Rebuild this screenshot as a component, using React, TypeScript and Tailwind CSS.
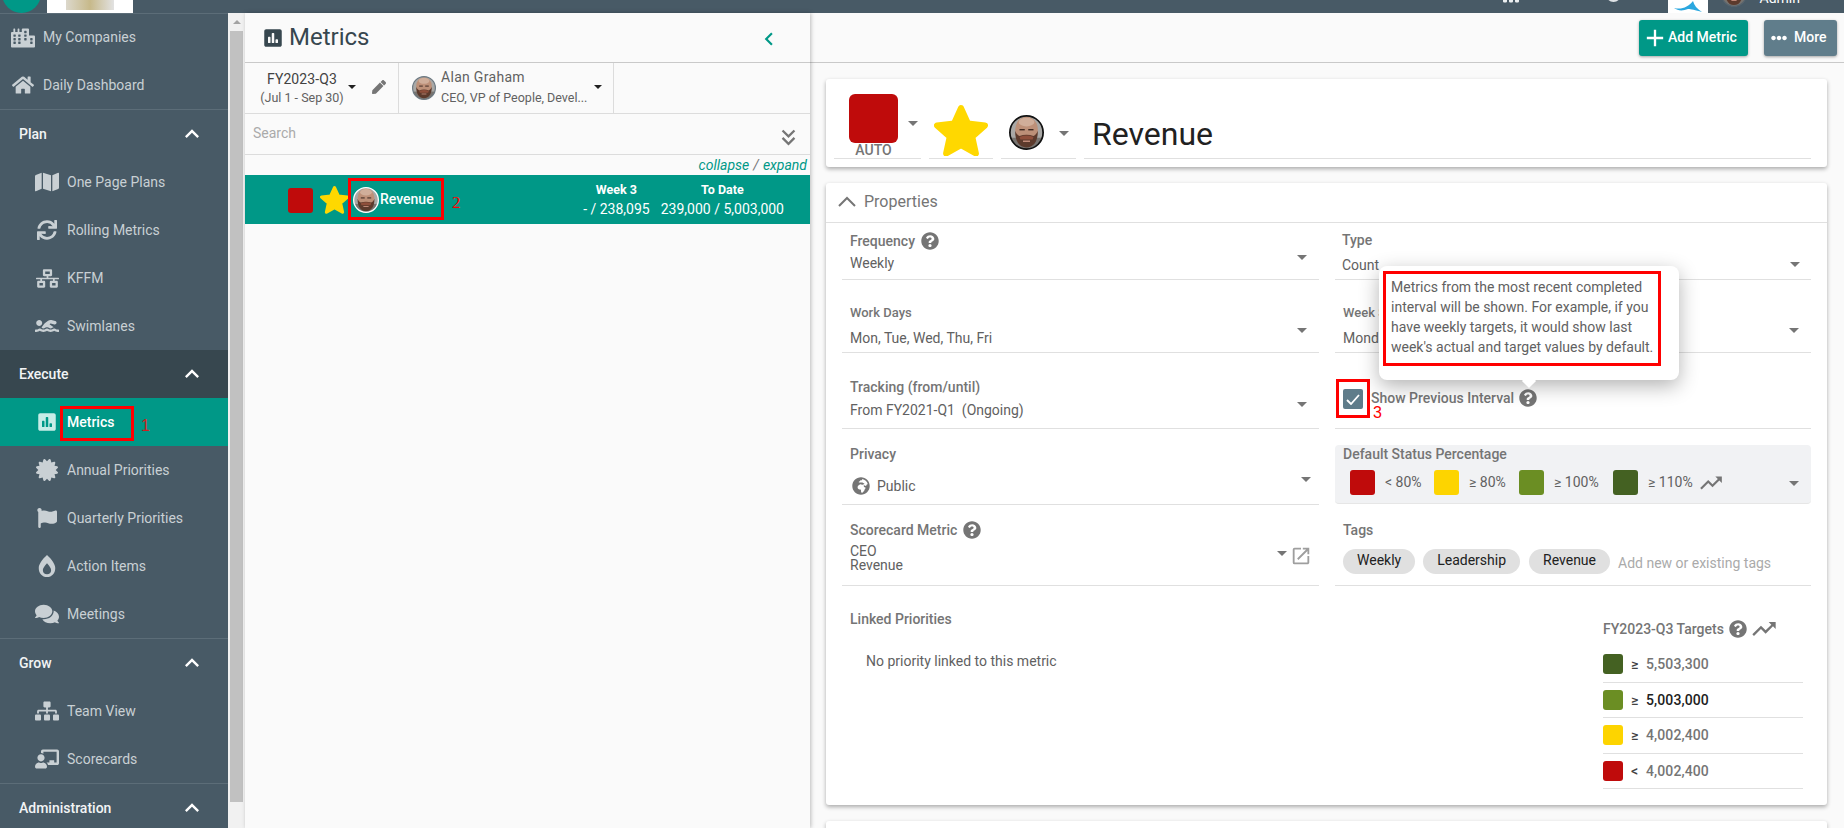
import React from "react";
import {
  FaCity, FaHome, FaMap, FaSync, FaNetworkWired, FaSwimmer, FaPoll, FaCertificate, FaFlag, FaBurn,
  FaComments, FaSitemap, FaChalkboardTeacher, FaQuestionCircle, FaGlobeAfrica, FaPen, FaEllipsisH,
} from "react-icons/fa";
import { MdExpandLess, MdTrendingUp, MdOpenInNew, MdAdd, MdKeyboardDoubleArrowDown, MdChevronLeft } from "react-icons/md";

const RED = "#bf0b0b";
const YELLOW = "#fdd400";
const LIME = "#6b8e23";
const GREEN = "#446122";

function Avatar({ size, ring }: { size: number; ring: string }) {
  const id = `c${size}${ring.slice(1)}`;
  return (
    <svg width={size} height={size} viewBox="0 0 40 40" className="shrink-0">
      <clipPath id={id}><circle cx="20" cy="20" r="19" /></clipPath>
      <g clipPath={`url(#${id})`}>
        <rect width="40" height="40" fill="#a9a8a6" />
        <rect x="0" y="26" width="40" height="14" fill="#77736f" />
        <ellipse cx="20" cy="17" rx="13" ry="15" fill="#bd9078" />
        <ellipse cx="20" cy="8" rx="9" ry="5" fill="#d0ae9a" />
        <path d="M7 18c0 14 6 19 13 19s13-5 13-19c-1 3-3 5-5 6-5-2-11-2-16 0-2-1-4-3-5-6z" fill="#5c3a2c" />
        <path d="M12 25c5-2 11-2 16 0l-1 3H13z" fill="#8f4f3b" />
        <rect x="12" y="16" width="6" height="1.6" fill="#3f2a22" />
        <rect x="22" y="16" width="6" height="1.6" fill="#3f2a22" />
        <path d="M16 30h8" stroke="#c08a78" strokeWidth="1.5" />
      </g>
      <circle cx="20" cy="20" r="19" fill="none" stroke={ring} strokeWidth="2" />
    </svg>
  );
}

function Star({ w, h }: { w: number; h: number }) {
  return (
    <svg width={w} height={h} viewBox="0 0 54 52" className="shrink-0">
      <path
        d="M27 4l7 15.5 17 1.9-12.7 11.4 3.6 16.7L27 41.2l-14.9 8.3 3.6-16.7L3 21.4l17-1.9z"
        fill="#ffd800" stroke="#ffd800" strokeWidth="6" strokeLinejoin="round"
      />
    </svg>
  );
}

function Caret({ className = "" }: { className?: string }) {
  return <div className={`w-0 h-0 shrink-0 border-x-[5px] border-x-transparent border-t-[5px] border-t-[#757575] ${className}`} />;
}

function Help() {
  return <FaQuestionCircle size={18} color="#757575" className="shrink-0" />;
}

function Swatch({ color, size }: { color: string; size: "s" | "m" }) {
  return <div className={`shrink-0 rounded-[3px] ${size === "s" ? "w-5 h-5" : "w-[25px] h-[25px]"}`} style={{ backgroundColor: color }} />;
}

function NavItem({ icon, label }: { icon: React.ReactNode; label: string }) {
  return (
    <div className="h-12 shrink-0 flex items-center pl-[35px] text-[14px] text-[#c9d0d4]">
      <div className="w-6 flex justify-center">{icon}</div>
      <span className="ml-2">{label}</span>
    </div>
  );
}

function Section({ label, dark }: { label: string; dark?: boolean }) {
  return (
    <div className={`h-12 shrink-0 flex items-center justify-between pl-[19px] pr-[22px] text-[14px] font-medium text-[#f2f4f5] ${dark ? "bg-[#37474f]" : ""}`}>
      <span>{label}</span>
      <MdExpandLess size={28} color="#ffffff" />
    </div>
  );
}

function Sidebar() {
  const c = "#c9d0d4";
  return (
    <div className="w-[228px] shrink-0 bg-[#485a66] border-t border-[#5c6d78] flex flex-col overflow-hidden">
      <div className="h-[47px] shrink-0 flex items-center pl-[11px] text-[14px] text-[#c9d0d4]">
        <FaCity size={24} color={c} />
        <span className="ml-2">My Companies</span>
      </div>
      <div className="h-12 shrink-0 flex items-center pl-[11px] text-[14px] text-[#c9d0d4]">
        <div className="w-6 flex justify-center"><FaHome size={22} color={c} /></div>
        <span className="ml-2">Daily Dashboard</span>
      </div>
      <div className="h-px shrink-0 bg-[#5c6d78]" />
      <Section label="Plan" />
      <NavItem icon={<FaMap size={24} color={c} />} label="One Page Plans" />
      <NavItem icon={<FaSync size={20} color={c} />} label="Rolling Metrics" />
      <NavItem icon={<FaNetworkWired size={23} color={c} />} label="KFFM" />
      <NavItem icon={<FaSwimmer size={24} color={c} />} label="Swimlanes" />
      <Section label="Execute" dark />
      <div className="h-12 shrink-0 flex items-center pl-[35px] text-[14px] font-medium text-white bg-[#009887]">
        <div className="w-6 flex justify-center"><FaPoll size={20} color="#c8ece7" /></div>
        <span className="ml-2">Metrics</span>
      </div>
      <NavItem icon={<FaCertificate size={22} color={c} />} label="Annual Priorities" />
      <NavItem icon={<FaFlag size={20} color={c} />} label="Quarterly Priorities" />
      <NavItem icon={<FaBurn size={22} color={c} />} label="Action Items" />
      <NavItem icon={<FaComments size={24} color={c} />} label="Meetings" />
      <div className="h-px shrink-0 bg-[#5c6d78]" />
      <Section label="Grow" />
      <NavItem icon={<FaSitemap size={24} color={c} />} label="Team View" />
      <NavItem icon={<FaChalkboardTeacher size={24} color={c} />} label="Scorecards" />
      <div className="h-px shrink-0 bg-[#5c6d78]" />
      <Section label="Administration" />
    </div>
  );
}

function Scrollbar() {
  return (
    <div className="w-[17px] shrink-0 bg-[#f1f1f1] flex flex-col items-center">
      <div className="h-[18px] flex items-center">
        <div className="w-0 h-0 border-x-[4px] border-x-transparent border-b-[4px] border-b-[#a3a3a3]" />
      </div>
      <div className="w-[13px] h-[771px] bg-[#c1c1c1]" />
    </div>
  );
}

function LeftPanel() {
  return (
    <div className="w-[565px] shrink-0 bg-[#fafafa] flex flex-col relative z-10 shadow-[1px_0_4px_rgba(0,0,0,0.25)]">
      <div className="h-[49px] shrink-0 flex items-center pl-[18px] pr-[28px] text-[#37474f]">
        <FaPoll size={20} color="#37474f" />
        <span className="ml-[6px] text-[24px] leading-[28px] flex-1 -mt-[1px]">Metrics</span>
        <MdChevronLeft size={26} color="#009887" className="mt-[2px]" />
      </div>
      <div className="h-[52px] shrink-0 flex border-y border-[#c9c9c9] border-b-[#dcdcdc] text-[#616161]">
        <div className="w-[154px] shrink-0 border-r border-[#dcdcdc] flex items-center">
          <div className="w-[114px] flex flex-col items-center">
            <span className="text-[14px] leading-[20px] text-[#424242] tracking-[0.1px] mt-[-1px]">FY2023-Q3</span>
            <span className="text-[12.5px] leading-[18px]">(Jul 1 - Sep 30)</span>
          </div>
          <div className="w-0 h-0 border-x-[4px] border-x-transparent border-t-[4px] border-t-[#212121] -ml-[11px] -mt-[2px]" />
          <FaPen size={14} color="#757575" className="ml-[16px] -mt-[2px]" />
        </div>
        <div className="w-[215px] shrink-0 border-r border-[#dcdcdc] flex items-center pl-[13px]">
          <Avatar size={24} ring="#6d7a83" />
          <div className="ml-[5px] flex flex-col w-[150px]">
            <span className="text-[14px] leading-[20px] tracking-[0.3px] -mt-[3px]">Alan Graham</span>
            <span className="text-[12.5px] leading-[18px] mt-[2px] whitespace-nowrap">CEO, VP of People, Devel...</span>
          </div>
          <div className="w-0 h-0 border-x-[4px] border-x-transparent border-t-[4px] border-t-[#212121] ml-[3px] -mt-[2px]" />
        </div>
      </div>
      <div className="h-[41px] shrink-0 border-b border-[#dcdcdc] flex items-center justify-between pl-2 pr-[8px]">
        <span className="text-[14px] text-[#aaaaaa] -mt-[1px]">Search</span>
        <MdKeyboardDoubleArrowDown size={27} color="#757575" className="mt-[6px]" />
      </div>
      <div className="h-5 shrink-0 flex items-center justify-end pr-[3px] text-[14px] italic text-[#009887]">
        <span>collapse</span><span className="text-[#757575] mx-[4px]">/</span><span>expand</span>
      </div>
      <div className="h-[49px] shrink-0 bg-[#009887] flex items-center pl-[43px] pr-[26px] text-white">
        <div className="w-[25px] h-[25px] rounded-[3px] mt-[1px]" style={{ backgroundColor: RED }} />
        <div className="ml-[7px]"><Star w={29} h={29} /></div>
        <div className="ml-[4px]"><Avatar size={26} ring="#ffffff" /></div>
        <span className="ml-[1px] text-[14px] font-medium -mt-[1px]">Revenue</span>
        <div className="ml-auto flex gap-[11px] text-center">
          <div className="flex flex-col">
            <span className="text-[12.5px] font-bold leading-[18px]">Week 3</span>
            <span className="text-[14px] leading-[18px] mt-[1px]">- / 238,095</span>
          </div>
          <div className="flex flex-col">
            <span className="text-[12.5px] font-bold leading-[18px]">To Date</span>
            <span className="text-[14px] leading-[18px] mt-[1px]">239,000 / 5,003,000</span>
          </div>
        </div>
      </div>
    </div>
  );
}

const labelCls = "text-[14px] leading-[20px] font-medium text-[#757575]";
const valueCls = "text-[14px] leading-[20px] text-[#616161]";

function HeadCard() {
  return (
    <div className="h-[88px] shrink-0 bg-white rounded-[3px] shadow-[0_2px_4px_rgba(0,0,0,0.32)] flex pl-2 pr-4 pb-2 gap-2">
      <div className="w-[87px] border-b border-[#e0e0e0] flex pt-[15px] pl-[15px]">
        <div className="w-[49px] flex flex-col items-center">
          <div className="w-[49px] h-[49px] rounded-[6px] shrink-0" style={{ backgroundColor: RED }} />
          <span className="text-[14px] leading-[14px] font-medium text-[#757575]">AUTO</span>
        </div>
        <Caret className="ml-[10px] mt-[27px]" />
      </div>
      <div className="w-[64px] border-b border-[#e0e0e0] pl-[5px] pt-[25px]"><Star w={54} h={52} /></div>
      <div className="w-[75px] border-b border-[#e0e0e0] flex pl-2 pt-[36px]">
        <Avatar size={35} ring="#111111" />
        <Caret className="ml-[15px] mt-[16px]" />
      </div>
      <div className="flex-1 border-b border-[#e0e0e0] pl-2 pt-[35px] text-[32px] leading-[40px] text-[#212121]">Revenue</div>
    </div>
  );
}

function Fields() {
  return (
    <div className="flex gap-4 pl-4 pr-4">
      <div className="w-[477px] flex flex-col">
        <div className="h-[57px] border-b border-[#e0e0e0] pt-2 pl-2 pr-3">
          <div className="flex items-center gap-[6px]"><span className={labelCls}>Frequency</span><Help /></div>
          <div className="flex justify-between mt-[2px]"><span className={valueCls}>Weekly</span><Caret className="mt-[2px]" /></div>
        </div>
        <div className="h-[73px] border-b border-[#e0e0e0] pt-[23px] pl-2 pr-3">
          <div className="text-[13px] leading-[20px] font-medium text-[#757575]">Work Days</div>
          <div className="flex justify-between mt-[5px]"><span className={valueCls}>Mon, Tue, Wed, Thu, Fri</span><Caret className="mt-0" /></div>
        </div>
        <div className="h-[76px] border-b border-[#e0e0e0] pt-[24px] pl-2 pr-3">
          <div className={labelCls}>Tracking (from/until)</div>
          <div className="flex justify-between mt-[3px]"><span className={`${valueCls} whitespace-pre`}>From FY2021-Q1  (Ongoing)</span><Caret className="mt-[2px]" /></div>
        </div>
        <div className="h-[76px] border-b border-[#e0e0e0] pt-[15px] pl-2 pr-2">
          <div className={labelCls}>Privacy</div>
          <div className="flex justify-between mt-[12px]">
            <span className={`${valueCls} flex items-center`}><FaGlobeAfrica size={18} color="#757575" className="ml-[2px] mr-[7px]" />Public</span>
            <Caret className="mt-[1px]" />
          </div>
        </div>
        <div className="h-[81px] border-b border-[#e0e0e0] pt-[15px] pl-2 pr-2">
          <div className="flex items-center gap-[6px]"><span className={labelCls}>Scorecard Metric</span><Help /></div>
          <div className="flex justify-between mt-[4px]">
            <div className="text-[14px] leading-[14px] text-[#616161]"><div>CEO</div><div>Revenue</div></div>
            <div className="flex items-start">
              <Caret className="mt-[7px] mr-[3px]" />
              <MdOpenInNew size={22} color="#9e9e9e" className="-mr-[1px] mt-[1px]" />
            </div>
          </div>
        </div>
      </div>
      <div className="w-[476px] flex flex-col">
        <div className="h-[57px] border-b border-[#e0e0e0] pt-[7px] pl-[7px] pr-[11px]">
          <div className={labelCls}>Type</div>
          <div className="flex justify-between mt-[5px]"><span className={valueCls}>Count</span><Caret className="mt-[7px]" /></div>
        </div>
        <div className="h-[73px] border-b border-[#e0e0e0] pt-[23px] pl-2 pr-3">
          <div className="text-[13px] leading-[20px] font-medium text-[#757575]">Week Start</div>
          <div className="flex justify-between mt-[5px]"><span className={valueCls}>Monday</span><Caret className="mt-0" /></div>
        </div>
        <div className="h-[76px] border-b border-[#e0e0e0] pt-9 pl-2 flex items-start">
          <div className="w-5 h-5 rounded-[2px] bg-[#5f7c8a] flex items-center justify-center shrink-0">
            <svg width="14" height="11" viewBox="0 0 14 11"><path d="M1 6l4 4 8-9" fill="none" stroke="#fff" strokeWidth="1.8" /></svg>
          </div>
          <span className={`${labelCls} ml-2 -mt-[1px]`}>Show Previous Interval</span>
          <span className="ml-[5px]"><Help /></span>
        </div>
        <div className="h-[76px] pt-4">
          <div className="h-[59px] rounded-[4px] bg-[#f1f2f4] border-b border-[#e6e6e6] pl-2 pr-3">
            <div className="text-[14px] leading-[18px] font-medium text-[#757575]">Default Status Percentage</div>
            <div className="flex items-center h-[25px] mt-[7px] pl-[7px] text-[14px] text-[#616161]">
              <div className="w-[84px] flex items-center gap-[10px]"><Swatch color={RED} size="m" /><span>&lt; 80%</span></div>
              <div className="w-[85px] flex items-center gap-[10px]"><Swatch color={YELLOW} size="m" /><span>≥ 80%</span></div>
              <div className="w-[94px] flex items-center gap-[10px]"><Swatch color={LIME} size="m" /><span>≥ 100%</span></div>
              <div className="flex items-center gap-[10px]"><Swatch color={GREEN} size="m" /><span>≥ 110%</span></div>
              <MdTrendingUp size={26} color="#757575" className="ml-[5px]" />
              <Caret className="ml-auto mt-[2px]" />
            </div>
          </div>
        </div>
        <div className="h-[81px] border-b border-[#e0e0e0] pt-[15px] pl-2">
          <div className={labelCls}>Tags</div>
          <div className="flex gap-2 mt-[9px] items-start">
            <div className="h-[25px] rounded-full bg-[#e0e0e0] px-[14px] pb-[2px] flex items-center text-[14px] text-[#212121]">Weekly</div>
            <div className="h-[25px] rounded-full bg-[#e0e0e0] px-[14px] pb-[2px] flex items-center text-[14px] text-[#212121]">Leadership</div>
            <div className="h-[25px] ml-[1px] rounded-full bg-[#e0e0e0] px-[14px] pb-[2px] flex items-center text-[14px] text-[#212121]">Revenue</div>
            <span className="text-[14px] leading-[20px] text-[#aaaaaa] mt-[4px]">Add new or existing tags</span>
          </div>
        </div>
      </div>
    </div>
  );
}

function Targets() {
  const rows: [string, string, string, boolean, string][] = [
    [GREEN, "≥", "5,503,300", false, "h-9"],
    [LIME, "≥", "5,003,000", true, "h-[35px]"],
    [YELLOW, "≥", "4,002,400", false, "h-9"],
    [RED, "<", "4,002,400", false, "h-[35px]"],
  ];
  return (
    <div className="w-[200px] shrink-0 pt-[33px]">
      <div className="flex items-center h-5 mb-2">
        <span className={labelCls}>FY2023-Q3 Targets</span>
        <span className="ml-[5px]"><Help /></span>
        <MdTrendingUp size={28} color="#757575" className="ml-[3px]" />
      </div>
      {rows.map(([c, sign, value, strong, h], i) => (
        <div key={i} className={`${h} border-b border-[#e0e0e0] flex items-start pt-[7px]`}>
          <Swatch color={c} size="s" />
          <span className="ml-2 w-[15px] text-[14px] leading-[20px] font-medium text-[#424242]">{sign}</span>
          <span className={`text-[14px] leading-[20px] font-medium tracking-[0.1px] ${strong ? "text-[#212121]" : "text-[#757575]"}`}>{value}</span>
        </div>
      ))}
    </div>
  );
}

function PropertiesCard() {
  return (
    <div className="h-[622px] shrink-0 bg-white rounded-[3px] shadow-[0_2px_4px_rgba(0,0,0,0.32)] flex flex-col">
      <div className="h-[40px] shrink-0 border-b border-[#e0e0e0] flex items-center pl-3">
        <svg width="18" height="11" viewBox="0 0 18 11" className="-mt-[2px]"><polyline points="1,10 9,2 17,10" fill="none" stroke="#757575" strokeWidth="2" /></svg>
        <span className="ml-2 text-[16px] text-[#757575] -mt-[1px]">Properties</span>
      </div>
      <Fields />
      <div className="flex justify-between pl-6 pr-6">
        <div className="pt-[23px]">
          <div className={labelCls}>Linked Priorities</div>
          <div className="ml-4 mt-[22px] text-[14px] leading-[20px] text-[#616161]">No priority linked to this metric</div>
        </div>
        <Targets />
      </div>
    </div>
  );
}

function RightPanel() {
  return (
    <div className="flex-1 bg-[#fafafa] flex flex-col min-w-0">
      <div className="h-[50px] shrink-0 border-b border-[#c9c9c9] flex items-center justify-end pr-[7px] gap-4">
        <div className="w-[109px] h-9 rounded-[3px] bg-[#009887] shadow-[0_1px_3px_rgba(0,0,0,0.35)] flex items-center pl-[2px] text-white text-[14px] font-medium">
          <MdAdd size={28} color="#ffffff" />
          <span className="-ml-[1px]">Add Metric</span>
        </div>
        <div className="w-[73px] h-9 rounded-[3px] bg-[#607d8b] shadow-[0_1px_3px_rgba(0,0,0,0.35)] flex items-center pl-[7px] text-white text-[14px] font-medium">
          <FaEllipsisH size={16} color="#ffffff" />
          <span className="ml-[7px]">More</span>
        </div>
      </div>
      <div className="flex-1 flex flex-col gap-4 pt-4 pl-4 pr-[17px] min-h-0">
        <HeadCard />
        <PropertiesCard />
        <div className="flex-1 bg-white rounded-t-[3px] shadow-[0_2px_4px_rgba(0,0,0,0.32)]" />
      </div>
    </div>
  );
}

function TopBar() {
  return (
    <div className="h-[13px] shrink-0 bg-[#485a66] flex items-end overflow-hidden pl-[2px]">
      <div className="w-[39px] h-[39px] rounded-full bg-[#009887] shrink-0" />
      <div className="w-[86px] h-[13px] bg-white ml-[6px] flex justify-center shrink-0">
        <div className="w-[48px] h-[10px] bg-gradient-to-r from-[#dcd8cc] via-[#c7b98a] to-[#e2e2e2]" />
      </div>
      <div className="ml-auto flex items-end">
        <FaSitemap size={16} color="#eceff1" className="mb-[9px] shrink-0" />
        <div className="w-[15px] h-[15px] rounded-full border-2 border-[#dfe3e6] ml-[87px] mb-[11px] shrink-0" />
        <div className="w-[40px] h-[13px] bg-white ml-[47px] flex justify-center items-end shrink-0">
          <svg width="32" height="13" viewBox="0 0 32 13"><path d="M2 8c8 2 14-1 19-7 1 4 4 8 9 11-7-2-11-3-14-3-5 2-10 2-14-1z" fill="#2aa7df" /></svg>
        </div>
        <div className="ml-[13px] mb-[6px] shrink-0"><Avatar size={26} ring="#55636d" /></div>
        <span className="ml-[13px] mr-[44px] mb-[8px] text-[14px] leading-[14px] text-white">Admin</span>
      </div>
    </div>
  );
}

export default function App() {
  return (
    <div className="relative w-[1844px] h-[828px] overflow-hidden font-[Roboto,sans-serif] flex flex-col bg-[#fafafa]">
      <TopBar />
      <div className="flex flex-1 min-h-0">
        <Sidebar />
        <Scrollbar />
        <LeftPanel />
        <RightPanel />
      </div>

      {/* Annotation boxes drawn over the screenshot */}
      <div className="absolute left-[60px] top-[406px] w-[74px] h-[35px] border-[3px] border-[#ff0000] z-20" />
      <span className="absolute left-[141px] top-[416px] text-[16px] leading-[20px] text-[#d02020] z-20 font-['Liberation_Sans',sans-serif]">1</span>
      <div className="absolute left-[348px] top-[178px] w-[96px] h-[42px] border-[3px] border-[#ff0000] z-20" />
      <span className="absolute left-[452px] top-[193px] text-[17px] leading-[20px] text-[#ff0000] z-20 font-['Liberation_Serif',serif]">2</span>
      <div className="absolute left-[1336px] top-[379px] w-[34px] h-[39px] border-[3px] border-[#ff0000] z-20" />
      <span className="absolute left-[1373px] top-[403px] text-[16px] leading-[20px] text-[#ff0000] z-20 font-['Liberation_Sans',sans-serif]">3</span>

      {/* Tooltip */}
      <div className="absolute left-[1379px] top-[266px] w-[300px] h-[114px] bg-white rounded-[8px] shadow-[0_6px_20px_rgba(0,0,0,0.3)] z-30">
        <div className="absolute left-[145px] top-[110px] w-[10px] h-[10px] bg-white rotate-45" />
        <div className="absolute left-[4px] top-[5px] w-[278px] h-[95px] border-[3px] border-[#ff0000] pl-[5px] pt-[3px] text-[14px] leading-[20px] text-[#616161] whitespace-nowrap">
          <div>Metrics from the most recent completed</div>
          <div>interval will be shown. For example, if you</div>
          <div>have weekly targets, it would show last</div>
          <div>week's actual and target values by default.</div>
        </div>
      </div>
    </div>
  );
}
